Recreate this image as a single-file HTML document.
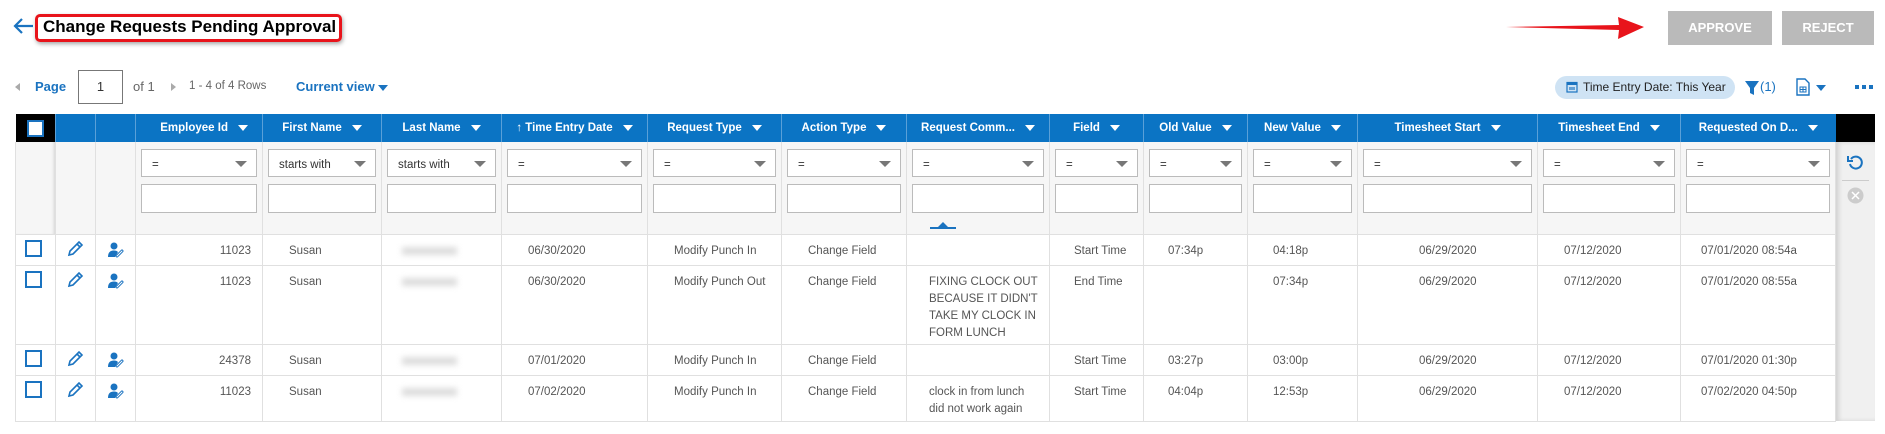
<!DOCTYPE html>
<html><head><meta charset="utf-8"><style>
*{box-sizing:border-box;margin:0;padding:0}
body{width:1885px;height:434px;background:#fff;font-family:"Liberation Sans",Arial,sans-serif;position:relative;overflow:hidden;color:#555}
.abs{position:absolute}
table{position:absolute;left:15px;top:114px;border-collapse:collapse;table-layout:fixed;width:1859px}
th{background:#0b74c4;color:#fff;font-size:11.5px;font-weight:bold;height:28px;border-left:1px solid #5aa0d8;white-space:nowrap;text-align:center;overflow:hidden}
th .dd{display:inline-block;width:0;height:0;border-left:5px solid transparent;border-right:5px solid transparent;border-top:6px solid #fff;margin-left:10px;vertical-align:middle}
td{border-left:1px solid #e0e0e0;border-top:1px solid #e0e0e0;font-size:11.5px;vertical-align:top;padding-top:8px;line-height:17px;color:#555}
tr.f td{background:#f6f6f6;height:92px;padding:7px 5px 0 5px;border-top:none}
.sel{height:28px;border:1px solid #bbb;background:#fff;font-size:11.5px;color:#333;padding:7px 0 0 10px;position:relative}
.sel:after{content:"";position:absolute;right:9px;top:11px;border-left:6px solid transparent;border-right:6px solid transparent;border-top:6px solid #777}
.inp{height:29px;border:1px solid #bbb;background:#fff;margin-top:7px}
.cb{width:17px;height:17px;border:2px solid #1a73c0;background:#fff;margin-left:9px;margin-top:-3px}
tr.r1 td{height:31px}
tr.r2 td{height:79px}
tr.r3 td{height:31px}
tr.r4 td{height:46px;border-bottom:1px solid #e0e0e0}
.blur{width:55px;height:8px;background:#ddd;filter:blur(3px);margin:4px 0 0 20px}
</style></head><body>
<svg class="abs" style="left:13px;top:17px" width="22" height="18" viewBox="0 0 22 18"><path d="M2 9H20M9 2L2 9l7 7" stroke="#1a73c0" stroke-width="2.2" fill="none"/></svg>
<div class="abs" style="left:35px;top:14px;width:307px;height:28px;border:3px solid #e8141b;border-radius:5px;box-shadow:1px 2px 4px rgba(0,0,0,.35)"></div>
<div class="abs" style="left:43px;top:17px;font-size:17px;font-weight:bold;color:#000">Change Requests Pending Approval</div>
<svg class="abs" style="left:1504px;top:15px" width="140" height="26"><path d="M2 12 L115 10 L114 2 L140 12 L114 24 L115 15 Z" fill="#e8141b"/></svg>
<div class="abs" style="left:1668px;top:11px;width:104px;height:34px;background:#bababa;color:#fff;font-weight:bold;font-size:13px;text-align:center;line-height:34px">APPROVE</div>
<div class="abs" style="left:1782px;top:11px;width:92px;height:34px;background:#bababa;color:#fff;font-weight:bold;font-size:13px;text-align:center;line-height:34px">REJECT</div>
<div class="abs" style="left:15px;top:83px;border-top:4px solid transparent;border-bottom:4px solid transparent;border-right:5px solid #aaa"></div>
<div class="abs" style="left:35px;top:79px;font-size:13px;font-weight:bold;color:#1a73c0">Page</div>
<div class="abs" style="left:78px;top:70px;width:45px;height:34px;border:1px solid #777;text-align:center;line-height:32px;font-size:13px;color:#333">1</div>
<div class="abs" style="left:133px;top:79px;font-size:13px;color:#666">of 1</div>
<div class="abs" style="left:171px;top:83px;border-top:4px solid transparent;border-bottom:4px solid transparent;border-left:5px solid #aaa"></div>
<div class="abs" style="left:189px;top:80px;font-size:11.5px;color:#666">1 - 4 of 4 Rows</div>
<div class="abs" style="left:296px;top:79px;font-size:13px;font-weight:bold;color:#1a73c0">Current view <span style="display:inline-block;border-left:5px solid transparent;border-right:5px solid transparent;border-top:6px solid #1a73c0;vertical-align:middle"></span></div>
<div class="abs" style="left:1555px;top:76px;width:180px;height:23px;border-radius:12px;background:#cfe3f4;font-size:12px;color:#222;line-height:23px;padding-left:28px">Time Entry Date: This Year</div>
<svg class="abs" style="left:1566px;top:81px" width="12" height="12"><rect x="1" y="1.5" width="10" height="9.5" fill="none" stroke="#1a73c0" stroke-width="1.2"/><rect x="1" y="1.5" width="10" height="2.5" fill="#1a73c0"/><rect x="3" y="6" width="6" height="3" fill="#1a73c0" opacity=".6"/></svg>
<svg class="abs" style="left:1745px;top:80px" width="14" height="16"><path d="M0 1H14L9 8V15L5 13V8Z" fill="#1a73c0"/></svg>
<div class="abs" style="left:1760px;top:79px;font-size:13px;color:#1a73c0">(1)</div>
<svg class="abs" style="left:1796px;top:78px" width="14" height="18"><path d="M1 1H9L13 5V17H1Z" fill="#fff" stroke="#1a73c0" stroke-width="1.4"/><rect x="4" y="9" width="6" height="5" fill="none" stroke="#1a73c0"/><path d="M7 9V14M4 11.5H10" stroke="#1a73c0"/></svg>
<div class="abs" style="left:1816px;top:85px;border-left:5px solid transparent;border-right:5px solid transparent;border-top:6px solid #1a73c0"></div>
<div class="abs" style="left:1855px;top:85px;width:18px;height:4px;background:repeating-linear-gradient(90deg,#1a73c0 0 4px,transparent 4px 7px)"></div>

<table>
<colgroup><col style="width:40px"><col style="width:40px"><col style="width:40px"><col style="width:127px"><col style="width:119px"><col style="width:120px"><col style="width:146px"><col style="width:134px"><col style="width:125px"><col style="width:143px"><col style="width:94px"><col style="width:104px"><col style="width:110px"><col style="width:180px"><col style="width:143px"><col style="width:155px"><col style="width:39px"></colgroup>
<tr><th style="background:#000;border:none"><div style="width:17px;height:17px;background:#fff;border:2px solid #1a73c0;margin:0 auto"></div></th><th></th><th></th>
<th style="text-align:right;padding-right:14px">Employee Id<span class="dd"></span></th>
<th>First Name<span class="dd"></span></th><th>Last Name<span class="dd"></span></th>
<th>↑ Time Entry Date<span class="dd"></span></th><th>Request Type<span class="dd"></span></th><th>Action Type<span class="dd"></span></th>
<th>Request Comm...<span class="dd"></span></th><th>Field<span class="dd"></span></th><th>Old Value<span class="dd"></span></th><th>New Value<span class="dd"></span></th>
<th>Timesheet Start<span class="dd"></span></th><th>Timesheet End<span class="dd"></span></th><th>Requested On D...<span class="dd"></span></th><th style="background:#000;border:none"></th></tr>
<tr class="f"><td style="box-shadow:inset -3px 0 3px -2px rgba(0,0,0,.15)"></td><td></td><td></td>
<td><div class="sel">=</div><div class="inp"></div></td>
<td><div class="sel">starts with</div><div class="inp"></div></td>
<td><div class="sel">starts with</div><div class="inp"></div></td>
<td><div class="sel">=</div><div class="inp"></div></td>
<td><div class="sel">=</div><div class="inp"></div></td>
<td><div class="sel">=</div><div class="inp"></div></td>
<td><div class="sel">=</div><div class="inp"></div><div style="margin:9px 0 0 18px;width:26px;border-bottom:2px solid #1a73c0;text-align:center;height:7px"><div style="display:inline-block;border-left:5px solid transparent;border-right:5px solid transparent;border-bottom:5px solid #1a73c0;vertical-align:top"></div></div></td>
<td><div class="sel">=</div><div class="inp"></div></td>
<td><div class="sel">=</div><div class="inp"></div></td>
<td><div class="sel">=</div><div class="inp"></div></td>
<td><div class="sel">=</div><div class="inp"></div></td>
<td><div class="sel">=</div><div class="inp"></div></td>
<td><div class="sel">=</div><div class="inp"></div></td>
<td style="background:#f0f0f0;box-shadow:inset 3px 0 4px rgba(0,0,0,.12);padding:0;border-top:none" rowspan="5"><svg style="margin:12px 0 0 11px" width="16" height="16"><path d="M4 5A6 6 0 1 1 3 10" fill="none" stroke="#1a73c0" stroke-width="2"/><path d="M1 2V7H6" fill="none" stroke="#1a73c0" stroke-width="2"/></svg><div style="margin:4px 6px;border-top:1px solid #ccc"></div><svg style="margin:2px 0 0 11px" width="17" height="17"><circle cx="8.5" cy="8.5" r="8" fill="#ccc"/><path d="M5 5L12 12M12 5L5 12" stroke="#fff" stroke-width="1.5"/></svg></td></tr>

<tr class="r1">
<td><div class="cb"></div></td>
<td><svg style="margin:-3px 0 0 10px" width="18" height="18"><path d="M3 15L4 11L13 2L16 5L7 14Z M11 4L14 7" fill="none" stroke="#1a73c0" stroke-width="1.6"/></svg></td>
<td><svg style="margin:-2px 0 0 11px" width="18" height="17"><circle cx="7" cy="5" r="3.5" fill="#1a73c0"/><path d="M1 16C1 11 3.5 9.5 7 9.5C9 9.5 10 10 11 11L8 16Z" fill="#1a73c0"/><path d="M10 15L15 10" stroke="#1a73c0" stroke-width="3" stroke-linecap="round"/><path d="M10 15L15 10" stroke="#fff" stroke-width="1" stroke-linecap="round"/></svg></td>
<td style="text-align:right;padding-right:11px">11023</td>
<td style="padding-left:26px">Susan</td>
<td><div class="blur"></div></td>
<td style="padding-left:26px">06/30/2020</td>
<td style="padding-left:26px">Modify Punch In</td>
<td style="padding-left:26px">Change Field</td>
<td style="padding-left:22px"></td>
<td style="padding-left:24px">Start Time</td>
<td style="padding-left:24px">07:34p</td>
<td style="padding-left:25px">04:18p</td>
<td style="padding-left:61px">06/29/2020</td>
<td style="padding-left:26px">07/12/2020</td>
<td style="padding-left:20px">07/01/2020 08:54a</td>
</tr>
<tr class="r2">
<td><div class="cb"></div></td>
<td><svg style="margin:-3px 0 0 10px" width="18" height="18"><path d="M3 15L4 11L13 2L16 5L7 14Z M11 4L14 7" fill="none" stroke="#1a73c0" stroke-width="1.6"/></svg></td>
<td><svg style="margin:-2px 0 0 11px" width="18" height="17"><circle cx="7" cy="5" r="3.5" fill="#1a73c0"/><path d="M1 16C1 11 3.5 9.5 7 9.5C9 9.5 10 10 11 11L8 16Z" fill="#1a73c0"/><path d="M10 15L15 10" stroke="#1a73c0" stroke-width="3" stroke-linecap="round"/><path d="M10 15L15 10" stroke="#fff" stroke-width="1" stroke-linecap="round"/></svg></td>
<td style="text-align:right;padding-right:11px">11023</td>
<td style="padding-left:26px">Susan</td>
<td><div class="blur"></div></td>
<td style="padding-left:26px">06/30/2020</td>
<td style="padding-left:26px">Modify Punch Out</td>
<td style="padding-left:26px">Change Field</td>
<td style="padding-left:22px;padding-right:8px">FIXING CLOCK OUT BECAUSE IT DIDN'T TAKE MY CLOCK IN FORM LUNCH</td>
<td style="padding-left:24px">End Time</td>
<td></td>
<td style="padding-left:25px">07:34p</td>
<td style="padding-left:61px">06/29/2020</td>
<td style="padding-left:26px">07/12/2020</td>
<td style="padding-left:20px">07/01/2020 08:55a</td>
</tr>
<tr class="r3">
<td><div class="cb"></div></td>
<td><svg style="margin:-3px 0 0 10px" width="18" height="18"><path d="M3 15L4 11L13 2L16 5L7 14Z M11 4L14 7" fill="none" stroke="#1a73c0" stroke-width="1.6"/></svg></td>
<td><svg style="margin:-2px 0 0 11px" width="18" height="17"><circle cx="7" cy="5" r="3.5" fill="#1a73c0"/><path d="M1 16C1 11 3.5 9.5 7 9.5C9 9.5 10 10 11 11L8 16Z" fill="#1a73c0"/><path d="M10 15L15 10" stroke="#1a73c0" stroke-width="3" stroke-linecap="round"/><path d="M10 15L15 10" stroke="#fff" stroke-width="1" stroke-linecap="round"/></svg></td>
<td style="text-align:right;padding-right:11px">24378</td>
<td style="padding-left:26px">Susan</td>
<td><div class="blur"></div></td>
<td style="padding-left:26px">07/01/2020</td>
<td style="padding-left:26px">Modify Punch In</td>
<td style="padding-left:26px">Change Field</td>
<td></td>
<td style="padding-left:24px">Start Time</td>
<td style="padding-left:24px">03:27p</td>
<td style="padding-left:25px">03:00p</td>
<td style="padding-left:61px">06/29/2020</td>
<td style="padding-left:26px">07/12/2020</td>
<td style="padding-left:20px">07/01/2020 01:30p</td>
</tr>
<tr class="r4">
<td><div class="cb"></div></td>
<td><svg style="margin:-3px 0 0 10px" width="18" height="18"><path d="M3 15L4 11L13 2L16 5L7 14Z M11 4L14 7" fill="none" stroke="#1a73c0" stroke-width="1.6"/></svg></td>
<td><svg style="margin:-2px 0 0 11px" width="18" height="17"><circle cx="7" cy="5" r="3.5" fill="#1a73c0"/><path d="M1 16C1 11 3.5 9.5 7 9.5C9 9.5 10 10 11 11L8 16Z" fill="#1a73c0"/><path d="M10 15L15 10" stroke="#1a73c0" stroke-width="3" stroke-linecap="round"/><path d="M10 15L15 10" stroke="#fff" stroke-width="1" stroke-linecap="round"/></svg></td>
<td style="text-align:right;padding-right:11px">11023</td>
<td style="padding-left:26px">Susan</td>
<td><div class="blur"></div></td>
<td style="padding-left:26px">07/02/2020</td>
<td style="padding-left:26px">Modify Punch In</td>
<td style="padding-left:26px">Change Field</td>
<td style="padding-left:22px;padding-right:8px">clock in from lunch did not work again</td>
<td style="padding-left:24px">Start Time</td>
<td style="padding-left:24px">04:04p</td>
<td style="padding-left:25px">12:53p</td>
<td style="padding-left:61px">06/29/2020</td>
<td style="padding-left:26px">07/12/2020</td>
<td style="padding-left:20px">07/02/2020 04:50p</td>
</tr>
</table>
</body></html>
